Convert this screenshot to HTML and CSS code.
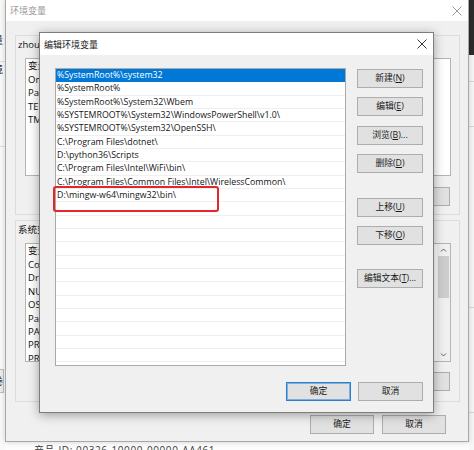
FILE: index.html
```html
<!DOCTYPE html>
<html lang="zh-CN">
<head>
<meta charset="utf-8">
<title>编辑环境变量</title>
<link rel="stylesheet" href="styles.css">
</head>
<body>
<div class="screen">
  <div class="bg-left">
    <div class="frag f1">量</div>
    <div class="rule r1"></div>
    <div class="frag f2">境</div>
    <div class="frag f3">C</div>
    <div class="rule r2"></div>
    <div class="frag-btn">卷</div>
  </div>
  <div class="bg-right">
    <div class="dark"></div>
    <div class="seg s1"></div>
    <div class="seg s2"></div>
    <div class="seg s3"></div>
    <div class="seg s4"></div>
  </div>
  <div class="bg-bottom">产品 ID: 00326-10000-00000-AA461</div>

  <div class="win outer">
    <div class="titlebar">
      <span class="title inactive">环境变量</span>
      <svg class="close" width="10" height="10" viewBox="0 0 10 10"><path d="M0.5 0.5L9.5 9.5M9.5 0.5L0.5 9.5" stroke="#9a9a9a" stroke-width="1"/></svg>
    </div>
    <div class="outer-body">
      <section class="group g-user">
        <div class="glabel">zhou 的用户变量(<u>U</u>)</div>
        <div class="lv lv-user">
          <div class="lv-content">
            <div class="lv-head"><span class="col">变量</span></div>
            <div class="lv-row">OneDrive</div>
            <div class="lv-row">Path</div>
            <div class="lv-row">TEMP</div>
            <div class="lv-row">TMP</div>
          </div>
        </div>
        <div class="gbtns">
          <button class="btn">新建(<u>N</u>)...</button>
          <button class="btn">编辑(<u>E</u>)...</button>
          <button class="btn">删除(<u>D</u>)</button>
        </div>
      </section>
      <section class="group g-sys">
        <div class="glabel">系统变量(<u>S</u>)</div>
        <div class="lv lv-sys">
          <div class="lv-content">
            <div class="lv-head"><span class="col">变量</span></div>
            <div class="lv-row">ComSpec</div>
            <div class="lv-row">DriverData</div>
            <div class="lv-row">NUMBER_OF_PROCESSORS</div>
            <div class="lv-row">OS</div>
            <div class="lv-row">Path</div>
            <div class="lv-row">PATHEXT</div>
            <div class="lv-row">PROCESSOR_ARCHITECTURE</div>
            <div class="lv-row">PROCESSOR_IDENTIFIER</div>
          </div>
          <div class="vscroll">
            <svg class="arr" width="13" height="12" viewBox="0 0 13 12"><path d="M4 7.5L6.5 5L9 7.5" fill="none" stroke="#606060" stroke-width="1"/></svg>
            <div class="track"><div class="thumb"></div></div>
            <svg class="arr" width="13" height="12" viewBox="0 0 13 12"><path d="M4 4.5L6.5 7L9 4.5" fill="none" stroke="#606060" stroke-width="1"/></svg>
          </div>
        </div>
        <div class="gbtns">
          <button class="btn">新建(<u>W</u>)...</button>
          <button class="btn">编辑(<u>I</u>)...</button>
          <button class="btn">删除(<u>L</u>)</button>
        </div>
      </section>
      <div class="outer-foot">
        <button class="btn">确定</button>
        <button class="btn">取消</button>
      </div>
    </div>
  </div>

  <div class="win dlg">
    <div class="titlebar">
      <span class="title">编辑环境变量</span>
      <svg class="close" width="10" height="10" viewBox="0 0 10 10"><path d="M0.5 0.5L9.5 9.5M9.5 0.5L0.5 9.5" stroke="#333" stroke-width="1"/></svg>
    </div>
    <div class="dlg-body">
      <div class="dlg-main">
        <div class="plist">
          <div class="prow sel">%SystemRoot%\system32</div>
          <div class="prow">%SystemRoot%</div>
          <div class="prow">%SystemRoot%\System32\Wbem</div>
          <div class="prow">%SYSTEMROOT%\System32\WindowsPowerShell\v1.0\</div>
          <div class="prow">%SYSTEMROOT%\System32\OpenSSH\</div>
          <div class="prow">C:\Program Files\dotnet\</div>
          <div class="prow">D:\python36\Scripts</div>
          <div class="prow">C:\Program Files\Intel\WiFi\bin\</div>
          <div class="prow">C:\Program Files\Common Files\Intel\WirelessCommon\</div>
          <div class="prow">D:\mingw-w64\mingw32\bin\</div>
          <div class="mark"></div>
        </div>
        <div class="bcol">
          <button class="btn">新建(<u>N</u>)</button>
          <button class="btn">编辑(<u>E</u>)</button>
          <button class="btn">浏览(<u>B</u>)...</button>
          <button class="btn">删除(<u>D</u>)</button>
          <button class="btn sp">上移(<u>U</u>)</button>
          <button class="btn">下移(<u>O</u>)</button>
          <button class="btn sp2">编辑文本(<u>T</u>)...</button>
        </div>
      </div>
      <div class="dlg-foot">
        <button class="btn def">确定</button>
        <button class="btn">取消</button>
      </div>
    </div>
  </div>
</div>
</body>
</html>
```
FILE: styles.css
```css
* { box-sizing: border-box; }
html, body { margin: 0; padding: 0; }
body {
  width: 474px;
  height: 450px;
  overflow: hidden;
  background: #fff;
  font-family: "Open Sans", "Noto Sans CJK SC", sans-serif;
  font-size: 8.8px;
  color: #111;
}
u { text-decoration: underline; text-underline-offset: 1px; }

.screen {
  position: relative;
  width: 474px;
  height: 450px;
  overflow: hidden;
  background: #fdfdfd;
}

/* background windows peeking out */
.bg-left {
  position: absolute;
  left: 0; top: 0;
  width: 5px; height: 450px;
  overflow: hidden;
  background: #fafafa;
  font-size: 10px;
  color: #333;
}
.frag { margin-left: -7px; line-height: 14px; }
.f1 { margin-top: 33px; }
.r1 { margin-top: 14px; border-top: 1px solid #dedede; }
.f2 { margin-top: 0; }
.f3 { margin-top: 16px; }
.r2 { margin-top: 40px; border-top: 1px solid #dedede; }
.frag-btn {
  margin-top: 222px;
  margin-left: -14px;
  width: 18px; height: 24px;
  line-height: 22px;
  text-align: right;
  border: 1px solid #bdbdbd;
  background: #ececec;
}

.bg-right {
  position: absolute;
  left: 469px; top: 0;
  width: 5px; height: 450px;
  background: #f7f7f7;
}
.bg-right .dark { height: 55px; background: #2c2c2c; }
.seg { border-bottom: 1px solid #d6d6d6; }
.s1 { height: 27px; }
.s2 { height: 45px; }
.s3 { height: 181px; }
.s4 { height: 105px; }

.bg-bottom {
  position: absolute;
  left: 34px; top: 443px;
  font-size: 10px;
  line-height: 14px;
  color: #3a3a3a;
  letter-spacing: 0.6px;
}

/* windows */
.win { position: absolute; background: #f0f0f0; }
.titlebar {
  display: flex;
  align-items: center;
  justify-content: space-between;
  background: #fff;
}
.title {
  font-size: 9px;
  color: #1a1a1a;
}
.title.inactive { color: #9a9a9a; }

.outer {
  left: 5px; top: 0;
  width: 464px; height: 442px;
  border: 1px solid #a8a8a8;
  border-top: none;
  box-shadow: 0 0 6px rgba(0,0,0,0.18);
}
.outer .titlebar { height: 21px; padding: 0 6px 0 4px; }
.outer-body { padding: 14px 8px 0 9px; }

.group {
  border: 1px solid #dcdcdc;
  padding: 2px 8px 0 2px;
}
.g-user { height: 180px; }
.g-sys { height: 182px; margin-top: 5px; }
.glabel {
  font-size: 9.5px;
  line-height: 14px;
  color: #111;
}
.lv {
  margin-left: 7px;
  margin-top: 6px;
  background: #fff;
  border: 1px solid #b4b4b4;
  display: flex;
  overflow: hidden;
}
.lv-user { height: 118px; }
.lv-sys { height: 119px; }
.lv-content { flex: 1; font-size: 9.5px; }
.lv-head {
  height: 14px;
  line-height: 14px;
  display: flex;
}
.lv-head .col { width: 120px; padding-left: 2px; border-right: 1px solid #e5e5e5; }
.lv-row {
  height: 13.4px;
  line-height: 13.4px;
  padding-left: 2px;
  white-space: nowrap;
}
.vscroll {
  width: 13px;
  display: flex;
  flex-direction: column;
  background: #f0f0f0;
}
.vscroll .arr { display: block; flex: none; }
.vscroll .track { flex: 1; padding: 0 1px; }
.thumb { height: 42px; background: #cdcdcd; }

.gbtns {
  display: flex;
  justify-content: flex-end;
  gap: 8px;
  margin-top: 10px;
  padding-right: 1px;
}
.g-user .gbtns { margin-top: 11px; }
.outer-foot {
  display: flex;
  justify-content: flex-end;
  gap: 8px;
  margin-top: 13px;
  padding-right: 14px;
}

.btn {
  width: 64px;
  height: 19px;
  padding: 0;
  margin: 0;
  border: 1px solid #adadad;
  background: #e1e1e1;
  font-family: "Open Sans", "Noto Sans CJK SC", sans-serif;
  font-size: 8.8px;
  line-height: 17px;
  color: #1a1a1a;
  text-align: center;
  white-space: nowrap;
}

/* edit dialog */
.dlg {
  left: 39px; top: 32px;
  width: 395px; height: 381px;
  border: 1px solid #7d7d7d;
  box-shadow: 0 2px 10px rgba(0,0,0,0.35);
}
.dlg .titlebar { height: 22px; padding: 0 6px 0 4px; }
.dlg-body { padding: 13px 10px 0 15px; }
.dlg-main { display: flex; align-items: flex-start; }
.plist {
  position: relative;
  width: 292px;
  height: 298px;
  border: 1px solid #a9a9a9;
  background: repeating-linear-gradient(to bottom, #fff 0, #fff 12.33px, #efefef 12.33px, #efefef 13.33px);
}
.prow {
  height: 13.33px;
  line-height: 13.33px;
  padding-left: 1px;
  white-space: nowrap;
  overflow: hidden;
  background: #fff;
  border-bottom: 1px solid #efefef;
  color: #151515;
}
.prow.sel { background: #0078d7; color: #fff; border-bottom-color: #0078d7; }
.mark {
  position: absolute;
  left: -3px; top: 117px;
  width: 166px; height: 26px;
  border: 2px solid #e3262b;
  border-radius: 3px;
}
.bcol {
  margin-left: 11px;
  display: flex;
  flex-direction: column;
  gap: 9.3px;
  padding-top: 1px;
}
.bcol .btn { width: 66px; }
.bcol .sp { margin-top: 15.5px; }
.bcol .sp2 { margin-top: 14.5px; }
.dlg-foot {
  display: flex;
  justify-content: flex-end;
  gap: 7px;
  margin-top: 16px;
}
.dlg-foot .btn { width: 65px; }
.btn.def { border-color: #2c7fd0; box-shadow: inset 0 0 0 1px rgba(0,120,215,0.45); }
```
